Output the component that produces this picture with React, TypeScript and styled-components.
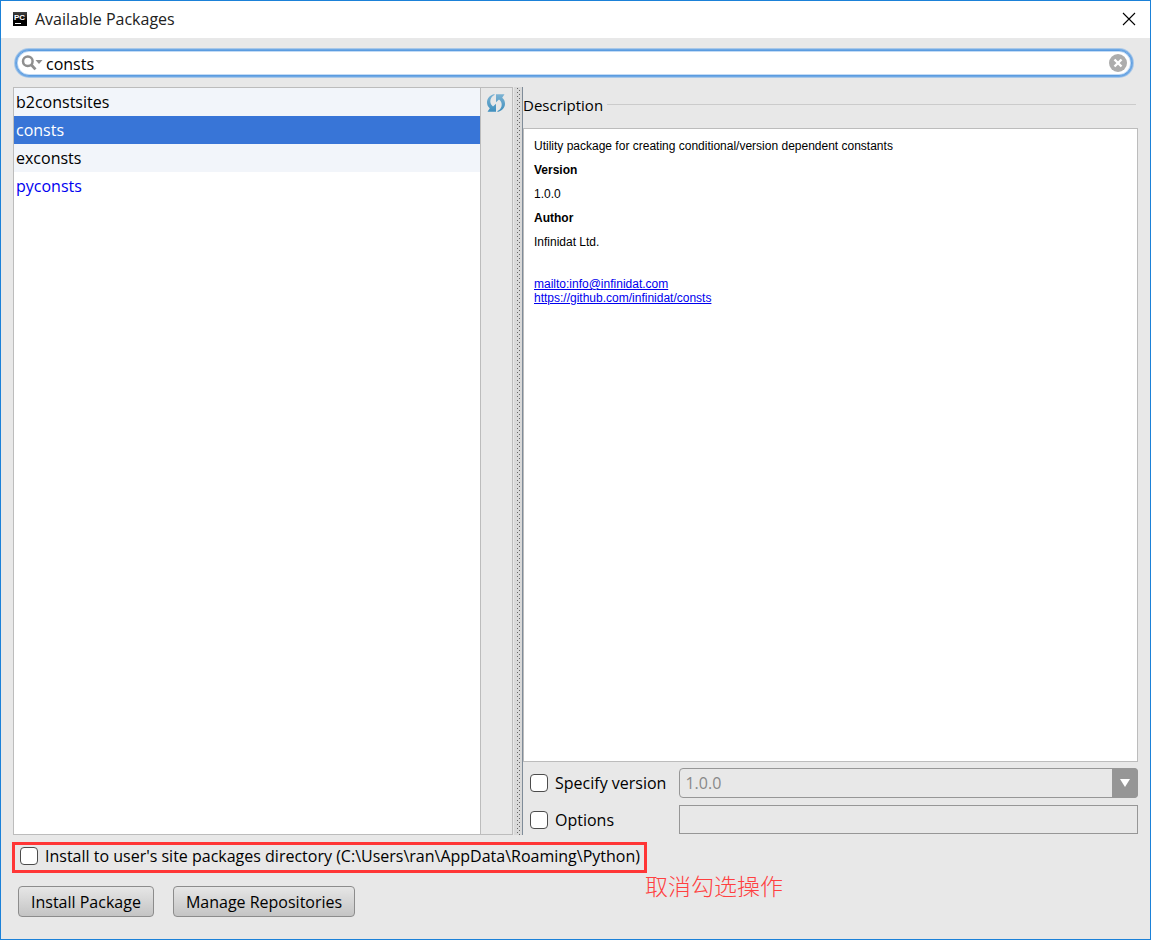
import React, { useState } from 'react';
import styled, { createGlobalStyle } from 'styled-components';

const GlobalStyle = createGlobalStyle`
  * { box-sizing: border-box; }
  body {
    margin: 0;
    font-family: 'Open Sans', 'Noto Sans CJK SC', sans-serif;
    font-size: 16px;
    line-height: 28px;
    color: #000;
  }
  button, input, select { font: inherit; color: inherit; }
`;

const Dialog = styled.main`
  display: flex;
  flex-direction: column;
  min-height: 100vh;
  border: 1px solid #1b81d8;
  background: #e8e8e8;
`;

const TitleBar = styled.header`
  display: flex;
  align-items: center;
  gap: 8px;
  height: 37px;
  padding: 0 14px 2px 12px;
  background: #fff;
`;

const Title = styled.h1`
  flex: 1;
  margin: 0;
  font-size: 16px;
  font-weight: 400;
  color: #222;
`;

const IconButton = styled.button`
  display: flex;
  padding: 0;
  border: 0;
  background: none;
`;

const SearchBar = styled.div`
  display: flex;
  align-items: center;
  height: 26px;
  margin: 12px 18px 0 15px;
  padding: 0 4px;
  border: 1px solid #5b9ce0;
  border-radius: 13px;
  background: #fff;
  box-shadow: 0 0 0 1px #6fa8e4, 0 0 0 2px #a9c8e8, inset 0 0 0 1px #c3dbf5;
`;

const SearchInput = styled.input`
  flex: 1;
  min-width: 0;
  height: 24px;
  padding: 2px 3px 0;
  border: 0;
  outline: 0;
  background: transparent;
`;

const Body = styled.div`
  display: flex;
  flex: 1;
  margin: 11px 12px 0;
`;

const ListPane = styled.section`
  display: flex;
  flex: 0 0 calc(44% + 5px);
  border: 1px solid #bcbcbc;
`;

const PackageList = styled.ul`
  flex: 1;
  margin: 0;
  padding: 0;
  list-style: none;
  background: #fff;
  border-right: 1px solid #bcbcbc;
`;

const PackageRow = styled.li<{ $selected: boolean; $installed: boolean }>`
  height: 28px;
  padding: 0 2px;
  cursor: default;
  color: ${p => (p.$selected ? '#fff' : p.$installed ? '#0000f0' : '#000')};
  background: ${p => (p.$selected ? '#3875d7' : '#fff')};
  &:nth-child(odd) {
    background: ${p => (p.$selected ? '#3875d7' : '#f2f5fa')};
  }
`;

const ListTools = styled.div`
  width: 31px;
  padding: 5px;
`;

const Splitter = styled.div`
  flex: 0 0 9px;
  margin-left: 1px;
  border-right: 1px solid #7f8c99;
  background:
    linear-gradient(#666 0 1px, transparent 1px) 3px 1px / 1px 4px repeat-y,
    linear-gradient(#666 0 1px, transparent 1px) 5px 3px / 1px 4px repeat-y,
    #d9d9d9;
`;

const DetailPane = styled.section`
  display: flex;
  flex: 1;
  flex-direction: column;
  min-width: 0;
`;

const SectionHead = styled.div`
  display: flex;
  align-items: center;
  gap: 4px;
  height: 41px;
  padding-bottom: 6px;
  &::after {
    content: '';
    flex: 1;
    height: 1px;
    margin-right: 2px;
    background: #cbcbcb;
  }
`;

const SectionTitle = styled.h2`
  margin: 0;
  font-size: 15px;
  font-weight: 400;
`;

const Description = styled.article`
  flex: 1;
  padding: 10px;
  border: 1px solid #bcbcbc;
  background: #fff;
  font-family: 'Liberation Sans', Arial, sans-serif;
  font-size: 12px;
  line-height: 14px;
  p, h3 { margin: 0 0 10px; font-size: 12px; }
`;

const Links = styled.div`
  display: flex;
  flex-direction: column;
  align-items: flex-start;
  margin-top: 28px;
  a { color: #00e; }
`;

const OptionsGrid = styled.div`
  display: grid;
  grid-template-columns: auto 1fr;
  align-items: center;
  gap: 7px 13px;
  padding: 6px 0 1px 7px;
`;

const CheckLabel = styled.label`
  display: flex;
  align-items: center;
  gap: 7px;
  white-space: nowrap;
`;

const CheckBox = styled.input.attrs({ type: 'checkbox' })`
  appearance: none;
  width: 18px;
  height: 18px;
  margin: 0;
  border: 1px solid #4c4c4c;
  border-radius: 4px;
  background: #fff;
  &:checked { background: #3875d7; }
`;

const SelectWrap = styled.div`
  position: relative;
  display: flex;
  height: 30px;
`;

const VersionSelect = styled.select`
  appearance: none;
  flex: 1;
  padding: 0 32px 0 5px;
  border: 1px solid #969696;
  border-radius: 4px;
  background: #e8e8e8;
  color: #888;
  opacity: 1;
`;

const SelectArrow = styled.span`
  position: absolute;
  top: 0;
  right: 0;
  display: flex;
  align-items: center;
  justify-content: center;
  width: 26px;
  height: 30px;
  border-radius: 0 4px 4px 0;
  background: #969696;
  pointer-events: none;
`;

const OptionsInput = styled.input`
  width: 100%;
  height: 29px;
  border: 1px solid #969696;
  background: #e8e8e8;
`;

const Footer = styled.footer`
  display: flex;
  flex-direction: column;
  align-items: flex-start;
  gap: 13px;
  padding: 7px 11px 22px;
`;

const Highlight = styled.div`
  position: relative;
  height: 31px;
  padding: 0 4px 0 5px;
  border: 3px solid #ff3636;
  label { height: 22px; }
`;

const Note = styled.span`
  position: absolute;
  top: 26px;
  left: calc(100% + 1px);
  font-family: 'Noto Sans CJK SC', sans-serif;
  font-size: 23px;
  font-weight: 300;
  color: #ff4040;
  white-space: nowrap;
`;

const Actions = styled.div`
  display: flex;
  gap: 19px;
  padding-left: 6px;
`;

const ActionButton = styled.button`
  height: 31px;
  padding: 0 12px;
  border: 1px solid #8c8c8c;
  border-radius: 4px;
  background: linear-gradient(#e6e6e6, #c4c4c4);
`;

const packages = [
  { name: 'b2constsites', installed: false },
  { name: 'consts', installed: false },
  { name: 'exconsts', installed: false },
  { name: 'pyconsts', installed: true },
];

const AppLogo = () => (
  <svg width="14" height="14" viewBox="0 0 14 14" aria-hidden="true">
    <defs>
      <linearGradient id="logo" x1="0" y1="0" x2="0" y2="1">
        <stop offset="0" stopColor="#444" />
        <stop offset="0.6" stopColor="#000" />
      </linearGradient>
    </defs>
    <rect width="14" height="14" fill="url(#logo)" />
    <text x="1" y="8" fontFamily="Liberation Sans, sans-serif" fontSize="8" fontWeight="700" fill="#fff">PC</text>
    <rect x="2" y="11" width="6" height="1" fill="#fff" />
  </svg>
);

const CloseIcon = () => (
  <svg width="14" height="14" viewBox="0 0 14 14" aria-hidden="true">
    <path d="M1 1l12 12M13 1L1 13" stroke="#000" strokeWidth="1.1" />
  </svg>
);

const SearchIcon = () => (
  <svg width="22" height="16" viewBox="0 0 22 16" aria-hidden="true">
    <circle cx="6.8" cy="6.3" r="4.8" fill="none" stroke="#8f8f8f" strokeWidth="2.5" />
    <path d="M10.2 9.8l4.3 4.6" stroke="#8f8f8f" strokeWidth="2.8" />
    <path d="M14.5 5h7L18 9z" fill="#8f8f8f" />
  </svg>
);

const ClearIcon = () => (
  <svg width="18" height="18" viewBox="0 0 18 18" aria-hidden="true">
    <circle cx="9" cy="9" r="9" fill="#adadad" />
    <path d="M5.5 5.5l7 7M12.5 5.5l-7 7" stroke="#fff" strokeWidth="2.4" />
  </svg>
);

const RefreshIcon = () => (
  <svg width="20" height="20" viewBox="0 0 20 20" aria-hidden="true">
    <defs>
      <linearGradient id="reload" x1="0" y1="0" x2="0" y2="1">
        <stop offset="0" stopColor="#7db3d3" />
        <stop offset="1" stopColor="#3f8fbe" />
      </linearGradient>
    </defs>
    <path d="M8.500 1C4 2 1 5.500 1 9.300c0 2.500 1 4.600 2.800 6L1.500 18.800H10V10.800L7 13.400C5.300 12.200 4.300 10.400 4.300 8.300 4.300 5.500 6 3 8.500 2z" fill="url(#reload)" />
    <path d="M11.500 19c4.500-1 7.500-4.500 7.500-8.300 0-2.500-1-4.600-2.800-6L18.500 1.200H10V9.200l3-2.600c1.700 1.200 2.700 3 2.700 5.100 0 2.800-1.700 5.300-4.200 6.300z" fill="url(#reload)" />
  </svg>
);

export default function App() {
  const [query, setQuery] = useState('consts');
  const [selected, setSelected] = useState('consts');

  return (
    <>
      <GlobalStyle />
      <Dialog>
        <TitleBar>
          <AppLogo />
          <Title>Available Packages</Title>
          <IconButton aria-label="Close"><CloseIcon /></IconButton>
        </TitleBar>
        <SearchBar>
          <SearchIcon />
          <SearchInput aria-label="Search packages" value={query} onChange={e => setQuery(e.target.value)} />
          <IconButton aria-label="Clear search" onClick={() => setQuery('')}><ClearIcon /></IconButton>
        </SearchBar>
        <Body>
          <ListPane>
            <PackageList>
              {packages.map(p => (
                <PackageRow
                  key={p.name}
                  $selected={p.name === selected}
                  $installed={p.installed}
                  onClick={() => setSelected(p.name)}
                >
                  {p.name}
                </PackageRow>
              ))}
            </PackageList>
            <ListTools>
              <IconButton aria-label="Reload list of packages"><RefreshIcon /></IconButton>
            </ListTools>
          </ListPane>
          <Splitter />
          <DetailPane>
            <SectionHead><SectionTitle>Description</SectionTitle></SectionHead>
            <Description>
              <p>Utility package for creating conditional/version dependent constants</p>
              <h3>Version</h3>
              <p>1.0.0</p>
              <h3>Author</h3>
              <p>Infinidat Ltd.</p>
              <Links>
                <a href="mailto:info@infinidat.com">mailto:info@infinidat.com</a>
                <a href="https://github.com/infinidat/consts">https://github.com/infinidat/consts</a>
              </Links>
            </Description>
            <OptionsGrid>
              <CheckLabel><CheckBox />Specify version</CheckLabel>
              <SelectWrap>
                <VersionSelect aria-label="Version" disabled><option>1.0.0</option></VersionSelect>
                <SelectArrow>
                  <svg width="10" height="8" viewBox="0 0 10 8" aria-hidden="true"><path d="M0 0h10L5 8z" fill="#fff" /></svg>
                </SelectArrow>
              </SelectWrap>
              <CheckLabel><CheckBox />Options</CheckLabel>
              <OptionsInput aria-label="Options" disabled />
            </OptionsGrid>
          </DetailPane>
        </Body>
        <Footer>
          <Highlight>
            <CheckLabel><CheckBox />Install to user's site packages directory (C:\Users\ran\AppData\Roaming\Python)</CheckLabel>
            <Note>取消勾选操作</Note>
          </Highlight>
          <Actions>
            <ActionButton>Install Package</ActionButton>
            <ActionButton>Manage Repositories</ActionButton>
          </Actions>
        </Footer>
      </Dialog>
    </>
  );
}
